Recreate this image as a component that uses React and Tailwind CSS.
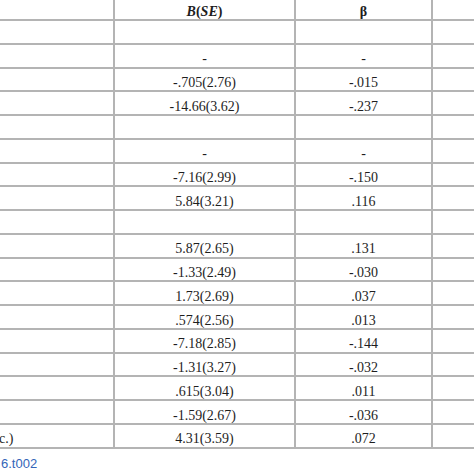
import React from "react";

const rows = [
  { b: "", beta: "" },
  { b: "-", beta: "-" },
  { b: "-.705(2.76)", beta: "-.015" },
  { b: "-14.66(3.62)", beta: "-.237" },
  { b: "", beta: "" },
  { b: "-", beta: "-" },
  { b: "-7.16(2.99)", beta: "-.150" },
  { b: "5.84(3.21)", beta: ".116" },
  { b: "", beta: "" },
  { b: "5.87(2.65)", beta: ".131" },
  { b: "-1.33(2.49)", beta: "-.030" },
  { b: "1.73(2.69)", beta: ".037" },
  { b: ".574(2.56)", beta: ".013" },
  { b: "-7.18(2.85)", beta: "-.144" },
  { b: "-1.31(3.27)", beta: "-.032" },
  { b: ".615(3.04)", beta: ".011" },
  { b: "-1.59(2.67)", beta: "-.036" },
  { b: "4.31(3.59)", beta: ".072", label: "c.)" },
];

const line = "border-[#b4b4b4]";

export default function App() {
  return (
    <div
      className="w-[474px] h-[474px] overflow-hidden bg-white text-[#1e1e1e]"
      style={{ fontFamily: '"Liberation Serif", "DejaVu Serif", serif' }}
    >
      <div className={`flex h-[21px] border-b-2 ${line} text-[14px] font-bold`}>
        <div className={`w-[115px] shrink-0 border-r-2 ${line}`} />
        <div className={`w-[181px] shrink-0 border-r-2 ${line} flex items-center justify-center pt-[3px]`}>
          <span>
            <i>B</i>(<i>SE</i>)
          </span>
        </div>
        <div className={`w-[137px] shrink-0 border-r-2 ${line} flex items-center justify-center pt-[3px]`}>
          β
        </div>
        <div className="flex-1" />
      </div>

      {rows.map((r, i) => (
        <div key={i} className={`flex h-[23.78px] border-b-2 ${line} text-[14px]`}>
          <div className={`w-[115px] shrink-0 border-r-2 ${line} flex items-center pt-[6px]`}>
            {r.label && <span className="-ml-[1px]">{r.label}</span>}
          </div>
          <div className={`w-[181px] shrink-0 border-r-2 ${line} flex items-center justify-center pt-[6px]`}>
            {r.b}
          </div>
          <div className={`w-[137px] shrink-0 border-r-2 ${line} flex items-center justify-center pt-[6px]`}>
            {r.beta}
          </div>
          <div className="flex-1" />
        </div>
      ))}

      <div
        className="pl-[1px] pt-[8px] text-[13px] text-[#3465b8] leading-none"
        style={{ fontFamily: '"Liberation Sans", Arial, sans-serif' }}
      >
        6.t002
      </div>
    </div>
  );
}
